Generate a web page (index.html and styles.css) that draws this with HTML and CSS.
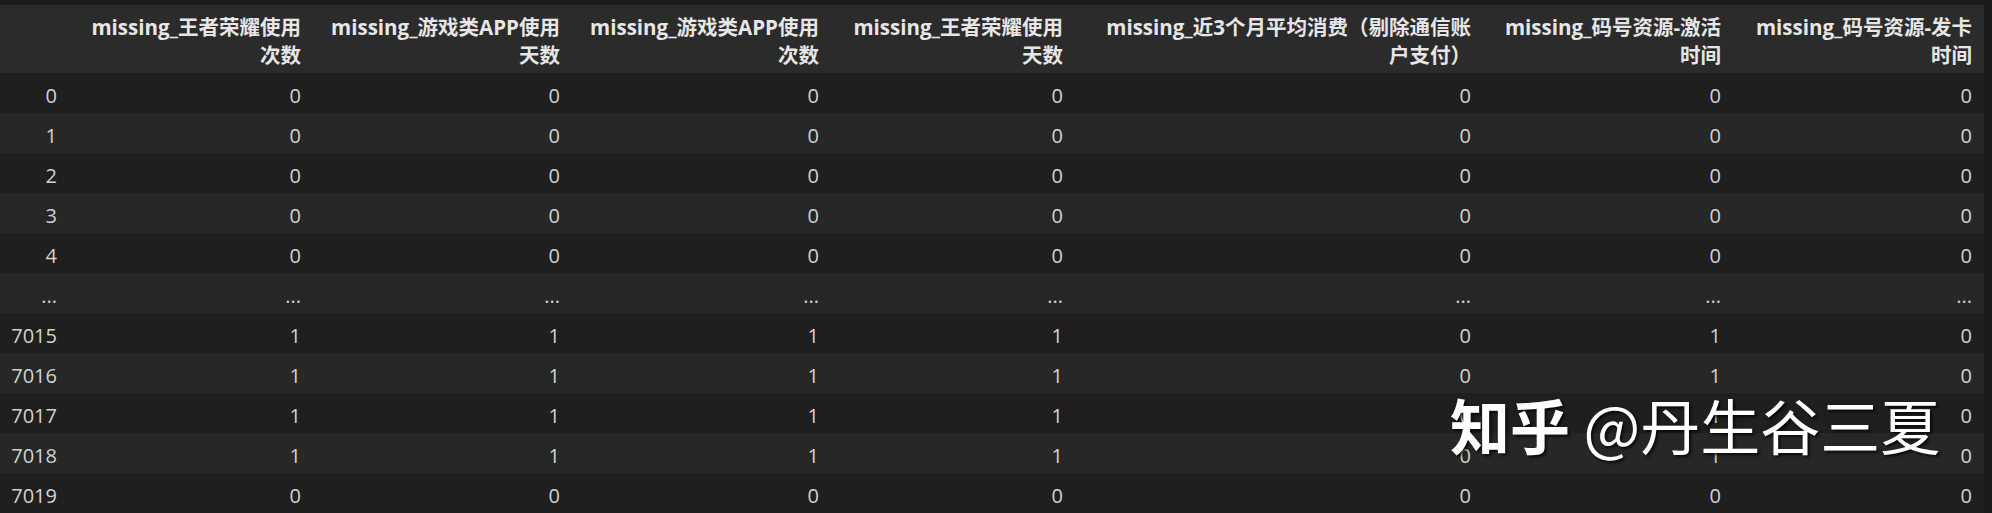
FILE: index.html
```html
<!DOCTYPE html>
<html lang="zh-CN">
<head>
<meta charset="utf-8">
<title>DataFrame</title>
<link rel="stylesheet" href="styles.css">
</head>
<body>
<div class="output">
<table class="dataframe">
  <colgroup>
    <col class="c-idx"><col class="c1"><col class="c2"><col class="c3"><col class="c4"><col class="c5"><col class="c6"><col class="c7">
  </colgroup>
  <thead>
    <tr>
      <th></th>
      <th>missing_王者荣耀使用<br>次数</th>
      <th>missing_游戏类APP使用<br>天数</th>
      <th>missing_游戏类APP使用<br>次数</th>
      <th>missing_王者荣耀使用<br>天数</th>
      <th>missing_近3个月平均消费（剔除通信账<br>户支付）</th>
      <th>missing_码号资源-激活<br>时间</th>
      <th>missing_码号资源-发卡<br>时间</th>
    </tr>
  </thead>
  <tbody>
    <tr><th>0</th><td>0</td><td>0</td><td>0</td><td>0</td><td>0</td><td>0</td><td>0</td></tr>
    <tr><th>1</th><td>0</td><td>0</td><td>0</td><td>0</td><td>0</td><td>0</td><td>0</td></tr>
    <tr><th>2</th><td>0</td><td>0</td><td>0</td><td>0</td><td>0</td><td>0</td><td>0</td></tr>
    <tr><th>3</th><td>0</td><td>0</td><td>0</td><td>0</td><td>0</td><td>0</td><td>0</td></tr>
    <tr><th>4</th><td>0</td><td>0</td><td>0</td><td>0</td><td>0</td><td>0</td><td>0</td></tr>
    <tr><th>...</th><td>...</td><td>...</td><td>...</td><td>...</td><td>...</td><td>...</td><td>...</td></tr>
    <tr><th>7015</th><td>1</td><td>1</td><td>1</td><td>1</td><td>0</td><td>1</td><td>0</td></tr>
    <tr><th>7016</th><td>1</td><td>1</td><td>1</td><td>1</td><td>0</td><td>1</td><td>0</td></tr>
    <tr><th>7017</th><td>1</td><td>1</td><td>1</td><td>1</td><td>0</td><td>1</td><td>0</td></tr>
    <tr><th>7018</th><td>1</td><td>1</td><td>1</td><td>1</td><td>0</td><td>1</td><td>0</td></tr>
    <tr><th>7019</th><td>0</td><td>0</td><td>0</td><td>0</td><td>0</td><td>0</td><td>0</td></tr>
  </tbody>
</table>
<div class="watermark"><span class="wm-logo">知乎</span> @丹生谷三夏</div>
</div>
</body>
</html>
```

FILE: styles.css
```css
html, body {
  margin: 0;
  padding: 0;
  background: #1b1b1b;
}
body {
  font-family: "Open Sans", "Noto Sans CJK SC", sans-serif;
  overflow: hidden;
}
.output {
  position: relative;
  padding-top: 5px;
  height: 508px;
}
.dataframe {
  border-collapse: collapse;
  border-spacing: 0;
  table-layout: fixed;
  width: 1984px;
  font-size: 20px;
  color: #d2d2d2;
}
.c-idx { width: 69px; }
.c1 { width: 244px; }
.c2 { width: 259px; }
.c3 { width: 259px; }
.c4 { width: 244px; }
.c5 { width: 408px; }
.c6 { width: 250px; }
.c7 { width: 251px; }

.dataframe thead tr {
  background: #2b2b2b;
}
.dataframe thead th {
  font-weight: 700;
  font-size: 20.5px;
  color: #e6e6e6;
  text-align: right;
  white-space: nowrap;
  line-height: 28px;
  padding: 6px 12px 4px 0;
  height: 68px;
  box-sizing: border-box;
  vertical-align: bottom;
}
.dataframe tbody tr {
  background: #1f1f1f;
  height: 40px;
}
.dataframe tbody tr:nth-child(even) {
  background: #272727;
}
.dataframe tbody th,
.dataframe tbody td {
  font-weight: 400;
  text-align: right;
  line-height: 20px;
  padding: 13px 12px 7px 0;
  white-space: nowrap;
}
.watermark {
  position: absolute;
  left: 1450px;
  top: 392px;
  font-family: "Noto Sans CJK SC", sans-serif;
  font-size: 60px;
  line-height: 64px;
  color: #ffffff;
  white-space: nowrap;
  text-shadow: 2px 2px 3px rgba(0, 0, 0, 0.75);
}
.wm-logo {
  font-weight: 700;
}
```
